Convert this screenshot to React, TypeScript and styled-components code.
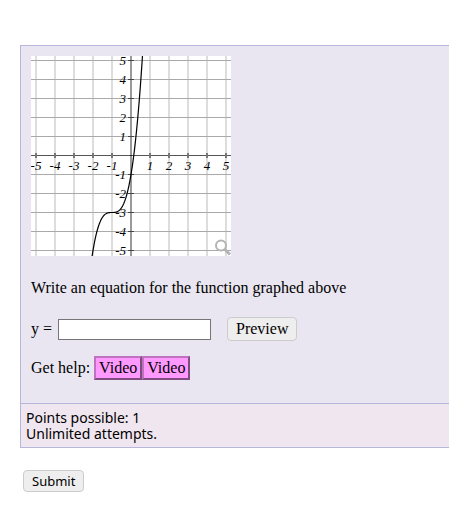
import React from "react";
import styled, { createGlobalStyle } from "styled-components";

const GlobalStyle = createGlobalStyle`
  *, *::before, *::after { box-sizing: border-box; }
  body {
    margin: 0;
    background: #fff;
    color: #000;
    font-family: "Liberation Serif", serif;
    font-size: 16px;
    line-height: 20px;
  }
`;

const sans = `"Noto Sans", "Open Sans", sans-serif`;

const Page = styled.form`
  padding: 45px 0 32px 20px;
`;

const Panel = styled.section`
  border: 1px solid #b7b7db;
  border-right: 0;
  background: #e9e6f1;
`;

const Question = styled.div`
  padding: 10px 10px 23px;
`;

const Graph = styled.svg`
  display: block;
  background: #fff;
`;

const Prompt = styled.p`
  margin: 22px 0 19px;
`;

const AnswerRow = styled.div`
  display: flex;
  align-items: center;
  gap: 16px;
`;

const AnswerLabel = styled.label`
  display: flex;
  align-items: center;
  gap: 6px;
`;

const AnswerInput = styled.input`
  width: 153px;
  height: 21px;
  padding: 1px 2px;
  border: 1px solid #767676;
  border-radius: 0;
  background: #fff;
  font: inherit;
`;

const Button = styled.button<{ $sans?: boolean }>`
  height: ${(p) => (p.$sans ? 22 : 24)}px;
  padding: 0 8px;
  border: 1px solid #ccc;
  border-radius: 4px;
  background: #eee;
  color: #000;
  font-family: ${(p) => (p.$sans ? sans : "inherit")};
  font-size: ${(p) => (p.$sans ? 13 : 16)}px;
  line-height: 20px;
`;

const HelpRow = styled.div`
  display: flex;
  align-items: center;
  margin-top: 15px;
`;

const HelpLabel = styled.span`
  margin-right: 4px;
`;

const HelpButton = styled.button`
  height: 24px;
  padding: 0 3px;
  border: 2px solid;
  border-color: #bf72bf #804c80 #804c80 #bf72bf;
  border-radius: 0;
  background: #f9f;
  color: #000;
  font: inherit;
`;

const Details = styled.footer`
  padding: 6px 5px 5px;
  border-top: 1px solid #b7b7db;
  background: #f0e6ef;
  font-family: ${sans};
  font-size: 14px;
  line-height: 16px;
`;

const Actions = styled.div`
  display: flex;
  padding: 22px 3px 0;
`;

const STEP = 19;
const CX = 100;
const CY = 99.5;
const ticks = [-5, -4, -3, -2, -1, 1, 2, 3, 4, 5];

const curve = Array.from({ length: 161 }, (_, i) => {
  const x = -2.05 + (i * 2.67) / 160;
  const y = 2 * (x + 1) ** 3 - 3;
  return `${(CX + x * STEP).toFixed(2)},${(CY - y * STEP).toFixed(2)}`;
}).join(" ");

function FunctionGraph() {
  return (
    <Graph width="200" height="200" viewBox="0 0 200 200" role="img" aria-label="Graph of a cubic function">
      {ticks.map((t) => (
        <path key={t} d={`M${CX + t * STEP} 0V200`} stroke="#ddd" strokeWidth="2" />
      ))}
      {ticks.map((t) => (
        <path key={t} d={`M0 ${CY - t * STEP}H200`} stroke="#aaa" />
      ))}
      <path d={`M${CX} 0V200`} stroke="#999" strokeWidth="2" />
      <path d={`M0 ${CY}H200`} stroke="#555" />
      {ticks.map((t) => (
        <g key={t} stroke="#444">
          <path d={`M${CX - 3} ${CY - t * STEP}h6`} />
          <path d={`M${CX + t * STEP} ${CY - 2.5}v5`} strokeWidth="2" stroke="#777" />
        </g>
      ))}
      <path d={`M${CX - 1} ${CY}h2`} stroke="#222" />
      <g fontFamily="'Liberation Serif', serif" fontStyle="italic" fontSize="13" fill="#000">
        {ticks.map((t) => (
          <g key={t}>
            <text x={CX + t * STEP} y="114" textAnchor="middle">{t}</text>
            <text x="95" y={CY - t * STEP + 4.5} textAnchor="end">{t}</text>
          </g>
        ))}
      </g>
      <polyline points={curve} fill="none" stroke="#000" strokeWidth="1.2" />
      <g fill="none" stroke="#b4b4b4" strokeWidth="2">
        <circle cx="190" cy="189.5" r="5" />
        <path d="M193.5 193L199 198.5" strokeWidth="3" />
      </g>
    </Graph>
  );
}

export default function App() {
  return (
    <>
      <GlobalStyle />
      <Page onSubmit={(e: React.FormEvent) => e.preventDefault()}>
        <Panel>
          <Question>
            <FunctionGraph />
            <Prompt>Write an equation for the function graphed above</Prompt>
            <AnswerRow>
              <AnswerLabel htmlFor="answer">
                y =
                <AnswerInput id="answer" type="text" autoComplete="off" />
              </AnswerLabel>
              <Button type="button">Preview</Button>
            </AnswerRow>
            <HelpRow>
              <HelpLabel>Get help:</HelpLabel>
              <HelpButton type="button">Video</HelpButton>
              <HelpButton type="button">Video</HelpButton>
            </HelpRow>
          </Question>
          <Details>
            <div>Points possible: 1</div>
            <div>Unlimited attempts.</div>
          </Details>
        </Panel>
        <Actions>
          <Button type="submit" $sans>Submit</Button>
        </Actions>
      </Page>
    </>
  );
}
